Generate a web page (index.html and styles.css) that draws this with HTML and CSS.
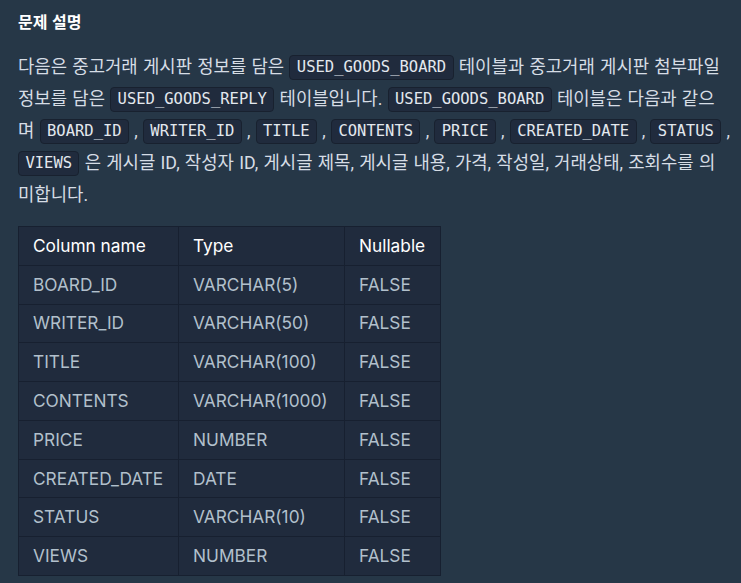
FILE: index.html
```html
<!DOCTYPE html>
<html lang="ko">
<head>
<meta charset="utf-8">
<title>문제 설명</title>
<link rel="stylesheet" href="styles.css">
</head>
<body>
<div class="guide">
  <h5 class="guide-title">문제 설명</h5>
  <p class="desc">다음은 중고거래 게시판 정보를 담은 <code class="ic">USED_GOODS_BOARD</code> 테이블과 중고거래 게시판 첨부파일<br>정보를 담은 <code class="ic">USED_GOODS_REPLY</code> 테이블입니다. <code class="ic">USED_GOODS_BOARD</code> 테이블은 다음과 같으<br>며 <code class="ic">BOARD_ID</code> , <code class="ic">WRITER_ID</code> , <code class="ic">TITLE</code> , <code class="ic">CONTENTS</code> , <code class="ic">PRICE</code> , <code class="ic">CREATED_DATE</code> , <code class="ic">STATUS</code> ,<br><code class="ic">VIEWS</code> 은 게시글 ID, 작성자 ID, 게시글 제목, 게시글 내용, 가격, 작성일, 거래상태, 조회수를 의<br>미합니다.</p>
  <table class="schema">
    <colgroup><col class="c1"><col class="c2"><col class="c3"></colgroup>
    <thead>
      <tr><th>Column name</th><th>Type</th><th>Nullable</th></tr>
    </thead>
    <tbody>
      <tr><td>BOARD_ID</td><td>VARCHAR(5)</td><td>FALSE</td></tr>
      <tr><td>WRITER_ID</td><td>VARCHAR(50)</td><td>FALSE</td></tr>
      <tr><td>TITLE</td><td>VARCHAR(100)</td><td>FALSE</td></tr>
      <tr><td>CONTENTS</td><td>VARCHAR(1000)</td><td>FALSE</td></tr>
      <tr><td>PRICE</td><td>NUMBER</td><td>FALSE</td></tr>
      <tr><td>CREATED_DATE</td><td>DATE</td><td>FALSE</td></tr>
      <tr><td>STATUS</td><td>VARCHAR(10)</td><td>FALSE</td></tr>
      <tr><td>VIEWS</td><td>NUMBER</td><td>FALSE</td></tr>
    </tbody>
  </table>
</div>
</body>
</html>
```
FILE: styles.css
```css
html, body {
  margin: 0;
  background: #263747;
}
.guide {
  padding: 9px 0 0 18px;
  font-family: "Noto Sans CJK KR", sans-serif;
  color: #d6dde5;
}
.guide-title {
  margin: 0;
  font-size: 16px;
  line-height: 24px;
  font-weight: 700;
  color: #ffffff;
}
.desc {
  margin: 18px 0 0;
  font-family: Roboto, "Noto Sans CJK KR", sans-serif;
  font-size: 17.8px;
  line-height: 32px;
  word-spacing: 0.8px;
}
.ic {
  display: inline-block;
  vertical-align: top;
  margin: 3.5px 0 0;
  padding: 0 6.4px;
  height: 23px;
  line-height: 23px;
  font-family: "DejaVu Sans Mono", monospace;
  font-size: 15.5px;
  word-spacing: 0;
  color: #e3e8ee;
  background: #202b3d;
  border: 1px solid #18212f;
  border-radius: 4px;
}
.schema {
  margin-top: 15px;
  border-collapse: collapse;
  table-layout: fixed;
  width: 422px;
  background: #202b3d;
  font-family: Inter, "Noto Sans CJK KR", sans-serif;
  font-size: 17.3px;
  line-height: 24px;
}
.c1 { width: 160px; }
.c2 { width: 166px; }
.c3 { width: 96px; }
.schema th, .schema td {
  border: 1px solid #172030;
  padding: 6.9px 14px;
  text-align: left;
  white-space: nowrap;
}
.schema th {
  font-weight: 400;
  color: #ffffff;
}
.schema td {
  color: #b2c0cc;
}
```
